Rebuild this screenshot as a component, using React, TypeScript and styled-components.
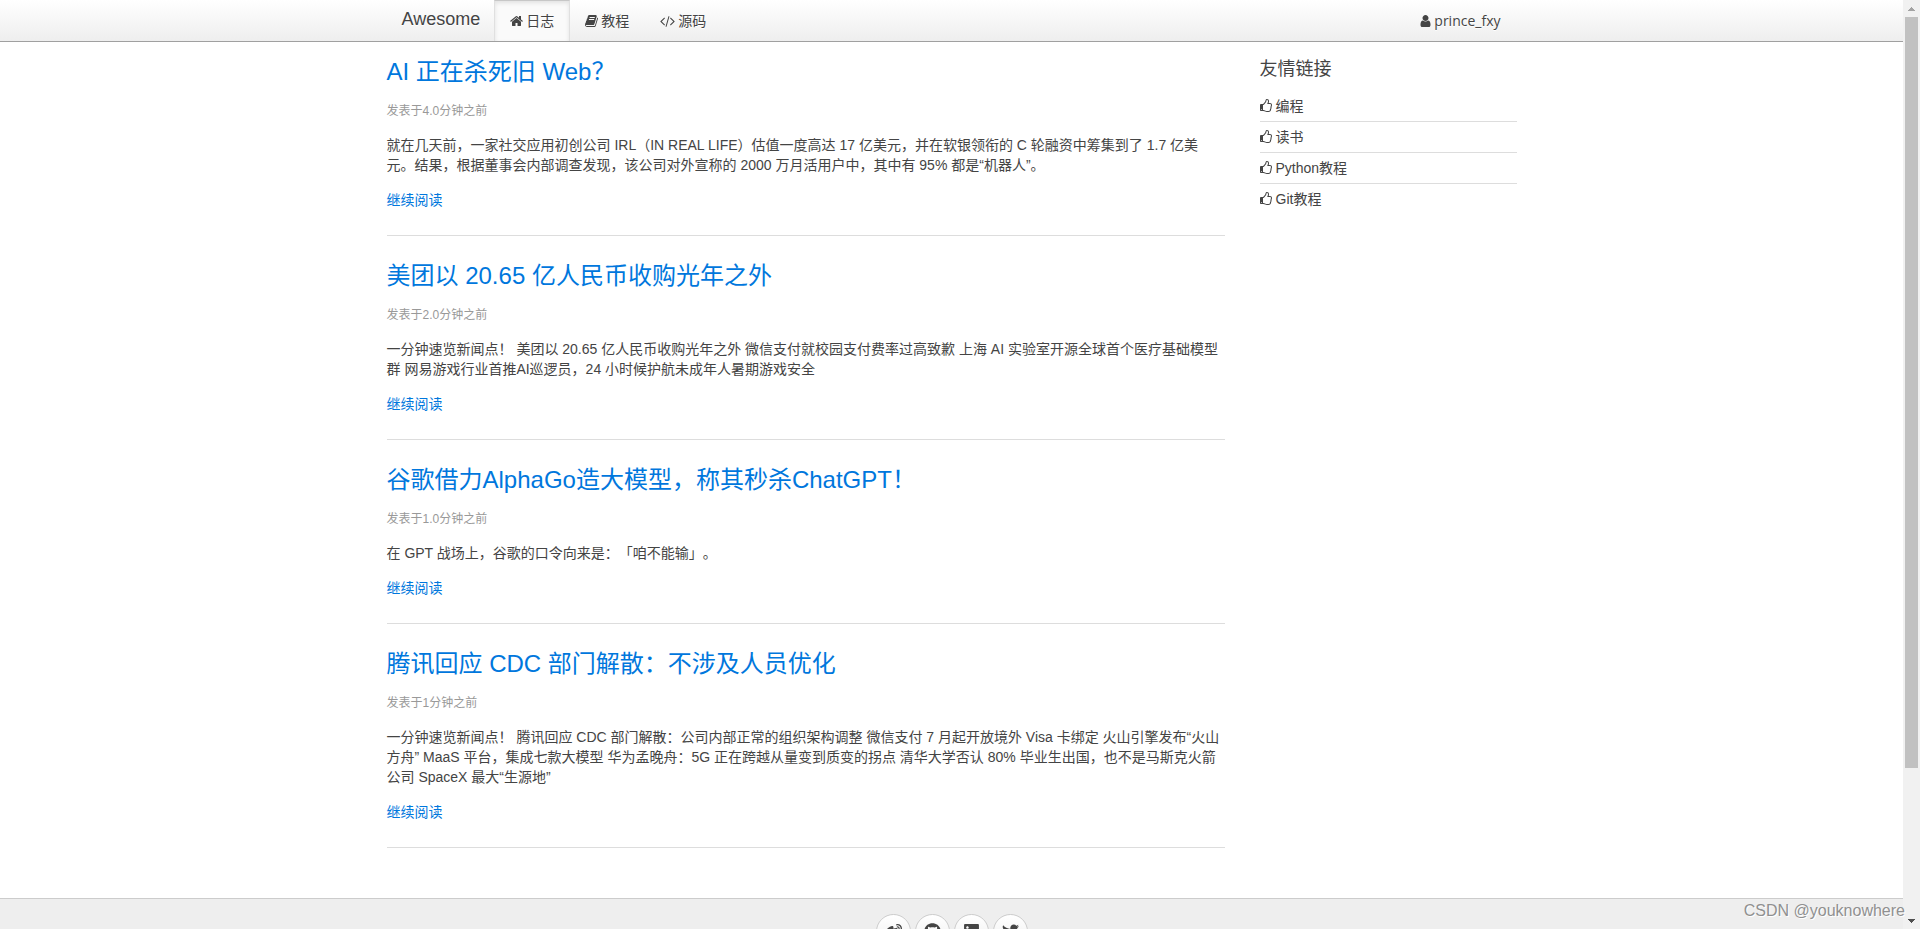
import React from 'react';
import styled, { createGlobalStyle, css } from 'styled-components';
import { FaGithub, FaLinkedin, FaTwitter, FaWeibo } from 'react-icons/fa';

const GlobalStyle = createGlobalStyle`
  *, *::before, *::after { box-sizing: border-box; }
  body {
    margin: 0;
    background: #fff;
    color: #444;
    font: 14px/20px "Liberation Sans", Arial, "Noto Sans CJK SC", sans-serif;
    text-spacing-trim: space-all;
  }
`;

const Frame = styled.div`
  display: flex;
  height: 100vh;
  position: relative;
  overflow: hidden;
`;

const Page = styled.div`
  flex: 1;
  min-width: 0;
  overflow-y: auto;
  scrollbar-width: none;
`;

const Container = styled.div`
  max-width: 1200px;
  margin: 0 auto;
  padding: 0 35px;
`;

const Navbar = styled.nav`
  background: linear-gradient(to bottom, #fff, #eee);
  border-bottom: 1px solid #a0a0a0;
  text-shadow: 0 1px 0 #fff;
`;

const NavRow = styled(Container)`
  display: flex;
  height: 41px;
`;

const Brand = styled.a`
  padding: 0 15px;
  font-size: 18px;
  line-height: 38px;
  color: #444;
  text-decoration: none;
`;

const NavLink = styled.a<{ $active?: boolean }>`
  display: flex;
  align-items: center;
  gap: 3px;
  height: 41px;
  padding: 0 15px;
  margin-left: -1px;
  border: 1px solid transparent;
  border-bottom-width: 0;
  font-family: "Open Sans", "Noto Sans CJK SC", sans-serif;
  color: #444;
  text-decoration: none;
  ${p => p.$active && css`
    background: #fafafa;
    border-color: rgba(0, 0, 0, 0.1);
    border-top-color: rgba(0, 0, 0, 0.2);
    box-shadow: inset 0 2px 4px rgba(0, 0, 0, 0.1);
  `}
`;

const NavItems = styled.div`
  display: flex;
  flex: 1;
`;

const Glyph = styled.svg`
  flex: none;
  height: 14px;
  fill: currentColor;
`;

const Columns = styled(Container)`
  display: grid;
  grid-template-columns: minmax(0, 1fr) 257px;
  gap: 35px;
  padding-top: 15px;
  padding-bottom: 25px;
`;

const Article = styled.article`
  display: flex;
  flex-direction: column;
  gap: 15px;
  padding-bottom: 25px;
  border-bottom: 1px solid #ddd;
  margin-bottom: 25px;
  p { margin: 0; }
`;

const Title = styled.h2`
  margin: 0;
  font-size: 24px;
  line-height: 30px;
  font-weight: 400;
`;

const BlueLink = styled.a`
  color: #07d;
  text-decoration: none;
`;

const Meta = styled.p`
  font-size: 12px;
  line-height: 18px;
  color: #999;
`;

const SideTitle = styled.h3`
  margin: 0 0 15px;
  font-size: 18px;
  line-height: 24px;
  font-weight: 400;
`;

const LinkList = styled.ul`
  list-style: none;
  margin: 0;
  padding: 0;
  li + li {
    margin-top: 5px;
    padding-top: 5px;
    border-top: 1px solid #ddd;
  }
`;

const SideLink = styled.a`
  display: flex;
  align-items: center;
  gap: 3px;
  color: #444;
  text-decoration: none;
`;

const Footer = styled.footer`
  display: flex;
  flex-direction: column;
  align-items: center;
  gap: 15px;
  padding: 15px;
  background: #eee;
  border-top: 1px solid #ccc;
`;

const Social = styled.div`
  display: flex;
  gap: 4px;
`;

const IconButton = styled.a`
  display: flex;
  align-items: center;
  justify-content: center;
  width: 35px;
  height: 35px;
  border: 1px solid #ccc;
  border-radius: 50%;
  background: #f5f5f5 linear-gradient(to bottom, #fff, #eee);
  color: #444;
  font-size: 17px;
`;

const ScrollTrack = styled.div`
  display: flex;
  flex-direction: column;
  align-items: center;
  justify-content: space-between;
  width: 17px;
  padding: 7px 2px 6px;
  background: #f1f1f1;
`;

const Thumb = styled.div`
  width: 13px;
  height: 82%;
  margin: 6px 0 auto;
  background: #c1c1c1;
`;

const Arrow = styled.svg<{ $color: string }>`
  flex: none;
  width: 7px;
  height: 4px;
  fill: ${p => p.$color};
`;

const Watermark = styled.div`
  position: absolute;
  right: 15px;
  bottom: 8px;
  font-size: 16px;
  color: #909090;
  text-shadow: 1px 1px 0 #fff;
`;

const paths = {
  home: 'M1472 992v480q0 26-19 45t-45 19h-384v-384h-256v384h-384q-26 0-45-19t-19-45v-480q0-1 .5-3t.5-3l575-474 575 474q1 2 1 6zm223-69l-62 74q-8 9-21 11h-3q-13 0-21-7l-692-577-692 577q-12 8-24 7-13-2-21-11l-62-74q-8-10-7-23.5t11-21.5l719-599q32-26 76-26t76 26l244 204v-195q0-14 9-23t23-9h192q14 0 23 9t9 23v408l219 182q10 8 11 21.5t-7 23.5z',
  book: 'M1703 478q40 57 18 129l-275 906q-19 64-76.5 107.5t-122.5 43.5h-923q-77 0-148.5-53.5t-99.5-131.5q-24-67-2-127 0-4 3-27t4-37q1-8-3-21.5t-3-19.5q2-11 8-21t16.5-23.5 16.5-23.5q23-38 45-91.5t30-91.5q3-10 .5-30t-.5-28q3-11 17-28t17-23q21-36 42-92t25-90q1-9-2.5-32t.5-28q4-13 22-30.5t22-22.5q19-26 42.5-84.5t27.5-96.5q1-8-3-25.5t-2-26.5q2-8 9-18t18-23 17-21q8-12 16.5-30.5t15-35 16-36 19.5-32 26.5-23.5 36-11.5 47.5 5.5l-1 3q38-9 51-9h761q74 0 114 56t18 130l-274 906q-36 119-71.5 153.5t-128.5 34.5h-869q-27 0-38 15-11 16-1 43 24 70 144 70h923q29 0 56-15.5t35-41.5l300-987q7-22 5-57 38 15 59 43zm-1064 2q-4 13 2 22.5t20 9.5h608q13 0 25.5-9.5t16.5-22.5l21-64q4-13-2-22.5t-20-9.5h-608q-13 0-25.5 9.5t-16.5 22.5zm-83 256q-4 13 2 22.5t20 9.5h608q13 0 25.5-9.5t16.5-22.5l21-64q4-13-2-22.5t-20-9.5h-608q-13 0-25.5 9.5t-16.5 22.5z',
  code: 'M553 1399l-50 50q-10 10-23 10t-23-10l-466-466q-10-10-10-23t10-23l466-466q10-10 23-10t23 10l50 50q10 10 10 23t-10 23l-393 393 393 393q10 10 10 23t-10 23zm591-1067l-373 1291q-4 13-15.5 19.5t-23.5 2.5l-62-17q-13-4-19.5-15.5t-2.5-24.5l373-1291q4-13 15.5-19.5t23.5-2.5l62 17q13 4 19.5 15.5t2.5 24.5zm657 651l-466 466q-10 10-23 10t-23-10l-50-50q-10-10-10-23t10-23l393-393-393-393q-10-10-10-23t10-23l50-50q10-10 23-10t23 10l466 466q10 10 10 23t-10 23z',
  user: 'M1536 1399q0 109-62.5 187t-150.5 78h-854q-88 0-150.5-78t-62.5-187q0-85 8.5-160.5t31.5-152 58.5-131 94-89 134.5-34.5q131 128 313 128t313-128q76 0 134.5 34.5t94 89 58.5 131 31.5 152 8.5 160.5zm-256-887q0 159-112.5 271.5t-271.5 112.5-271.5-112.5-112.5-271.5 112.5-271.5 271.5-112.5 271.5 112.5 112.5 271.5z',
  thumb: 'M384 1344q0-26-19-45t-45-19-45 19-19 45 19 45 45 19 45-19 19-45zm1152-576q0-51-39-89.5t-89-38.5h-352q0-58 48-159.5t48-160.5q0-98-32-145t-128-47q-26 26-38 85t-30.5 125.5-59.5 109.5q-22 23-77 91-4 5-23 30t-31.5 41-34.5 42.5-40 44-38.5 35.5-40 27-35.5 9h-32v640h32q13 0 31.5 3t33 6.5 38 11 35 11.5 35.5 12.5 29 10.5q211 73 342 73h121q192 0 192-167 0-26-5-56 30-16 47.5-52.5t17.5-73.5-18-69q53-50 53-119 0-25-10-55.5t-25-47.5q32-1 53.5-47t21.5-81zm128-1q0 89-49 163 9 33 9 69 0 77-38 144 3 21 3 43 0 101-60 178 1 139-85 219.5t-227 80.5h-129q-96 0-189.5-22.5t-216.5-65.5q-116-40-138-40h-288q-53 0-90.5-37.5t-37.5-90.5v-640q0-53 37.5-90.5t90.5-37.5h274q36-24 137-155 58-75 107-128 24-25 35.5-85.5t30.5-126.5 62-108q39-37 90-37 84 0 151 32.5t102 101.5 35 186q0 93-48 192h176q104 0 180 76t76 179z',
};

// Horizontal extent of each glyph inside the 1792-unit em: [left, width].
const extents: Record<keyof typeof paths, [number, number]> = {
  home: [64, 1664],
  book: [64, 1664],
  code: [-64, 1920],
  user: [192, 1408],
  thumb: [128, 1664],
};

function Icon({ name }: { name: keyof typeof paths }) {
  const [left, width] = extents[name];
  return (
    <Glyph viewBox={`${left} 0 ${width} 1792`} width={Math.round(width / 128)} aria-hidden="true">
      <path d={paths[name]} />
    </Glyph>
  );
}

const articles = [
  {
    title: 'AI 正在杀死旧 Web？',
    meta: '发表于4.0分钟之前',
    summary: '就在几天前，一家社交应用初创公司 IRL（IN REAL LIFE）估值一度高达 17 亿美元，并在软银领衔的 C 轮融资中筹集到了 1.7 亿美元。结果，根据董事会内部调查发现，该公司对外宣称的 2000 万月活用户中，其中有 95% 都是“机器人”。',
  },
  {
    title: '美团以 20.65 亿人民币收购光年之外',
    meta: '发表于2.0分钟之前',
    summary: '一分钟速览新闻点！ 美团以 20.65 亿人民币收购光年之外 微信支付就校园支付费率过高致歉 上海 AI 实验室开源全球首个医疗基础模型群 网易游戏行业首推AI巡逻员，24 小时候护航未成年人暑期游戏安全',
  },
  {
    title: '谷歌借力AlphaGo造大模型，称其秒杀ChatGPT！',
    meta: '发表于1.0分钟之前',
    summary: '在 GPT 战场上，谷歌的口令向来是：「咱不能输」。',
  },
  {
    title: '腾讯回应 CDC 部门解散：不涉及人员优化',
    meta: '发表于1分钟之前',
    summary: '一分钟速览新闻点！ 腾讯回应 CDC 部门解散：公司内部正常的组织架构调整 微信支付 7 月起开放境外 Visa 卡绑定 火山引擎发布“火山方舟” MaaS 平台，集成七款大模型 华为孟晚舟：5G 正在跨越从量变到质变的拐点 清华大学否认 80% 毕业生出国，也不是马斯克火箭公司 SpaceX 最大“生源地”',
  },
];

const friends = ['编程', '读书', 'Python教程', 'Git教程'];

export default function App() {
  return (
    <Frame>
      <GlobalStyle />
      <Page>
        <Navbar>
          <NavRow>
            <Brand href="#">Awesome</Brand>
            <NavItems>
              <NavLink href="#" $active><Icon name="home" />日志</NavLink>
              <NavLink href="#"><Icon name="book" />教程</NavLink>
              <NavLink href="#"><Icon name="code" />源码</NavLink>
            </NavItems>
            <NavLink href="#"><Icon name="user" />prince_fxy</NavLink>
          </NavRow>
        </Navbar>
        <Columns>
          <main>
            {articles.map(a => (
              <Article key={a.title}>
                <Title><BlueLink href="#">{a.title}</BlueLink></Title>
                <Meta>{a.meta}</Meta>
                <p>{a.summary}</p>
                <p><BlueLink href="#">继续阅读</BlueLink></p>
              </Article>
            ))}
          </main>
          <aside>
            <SideTitle>友情链接</SideTitle>
            <LinkList>
              {friends.map(f => (
                <li key={f}><SideLink href="#"><Icon name="thumb" />{f}</SideLink></li>
              ))}
            </LinkList>
          </aside>
        </Columns>
        <Footer>
          <Social>
            <IconButton href="#" aria-label="Weibo"><FaWeibo /></IconButton>
            <IconButton href="#" aria-label="GitHub"><FaGithub /></IconButton>
            <IconButton href="#" aria-label="LinkedIn"><FaLinkedin /></IconButton>
            <IconButton href="#" aria-label="Twitter"><FaTwitter /></IconButton>
          </Social>
        </Footer>
      </Page>
      <ScrollTrack aria-hidden="true">
        <Arrow $color="#a3a3a3" viewBox="0 0 7 4"><path d="M3 0h1v1h1v1h1v1h1v1H0V3h1V2h1V1h1z" /></Arrow>
        <Thumb />
        <Arrow $color="#505050" viewBox="0 0 7 4"><path d="M0 0h7v1H6v1H5v1H4v1H3V3H2V2H1V1H0z" /></Arrow>
      </ScrollTrack>
      <Watermark>CSDN @youknowhere</Watermark>
    </Frame>
  );
}
